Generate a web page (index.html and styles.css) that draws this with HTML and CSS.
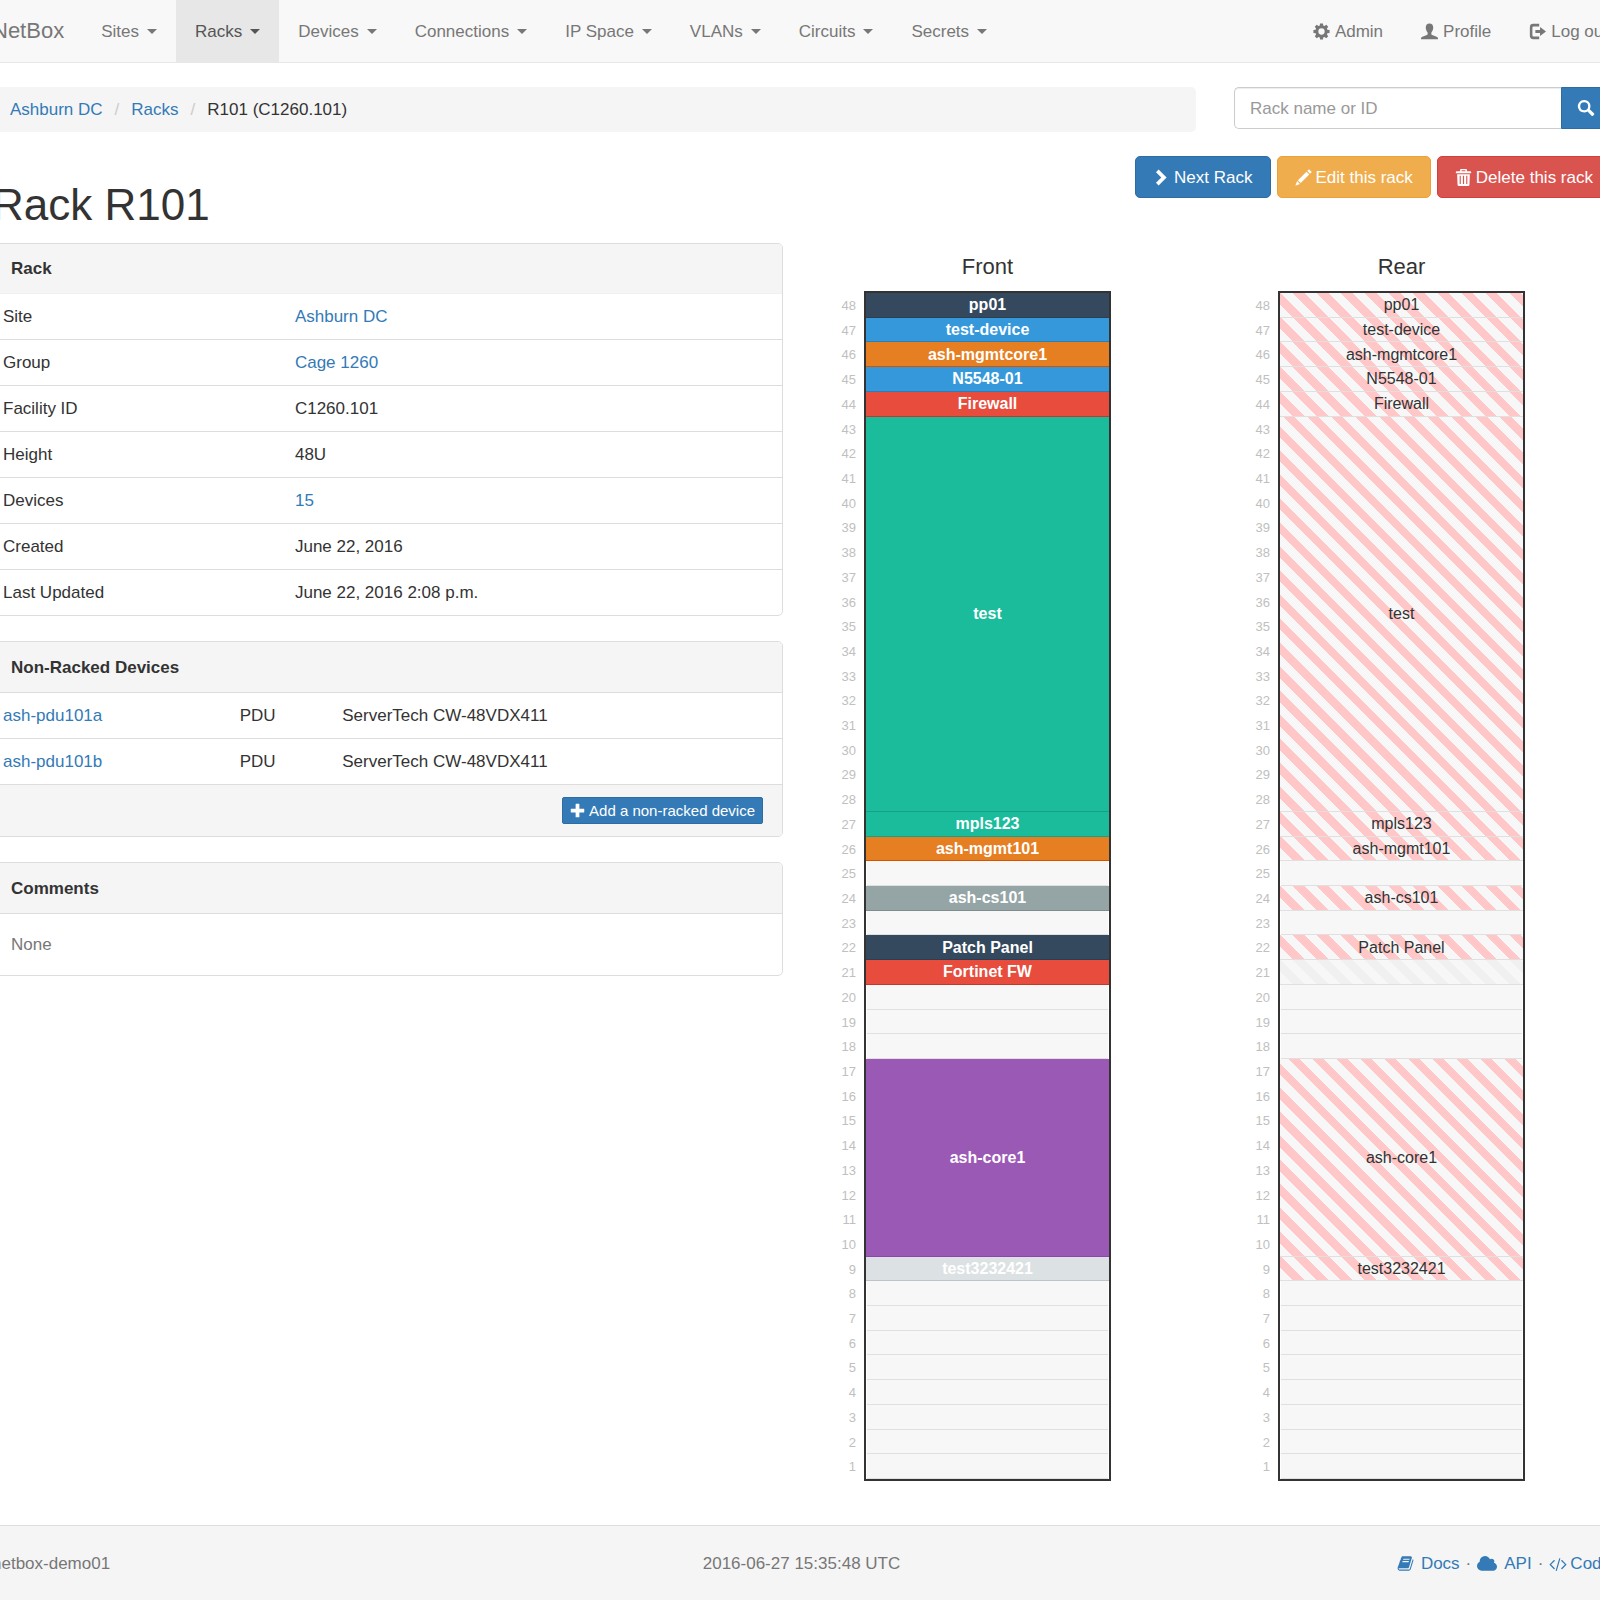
FILE: index.html
```html
<!DOCTYPE html>
<html lang="en">
<head>
<meta charset="utf-8">
<title>NetBox - Rack R101</title>
<meta name="viewport" content="width=device-width, initial-scale=1">
<link rel="stylesheet" href="styles.css">
</head>
<body>
<svg class="sprite" aria-hidden="true">
  <symbol id="i-cog" viewBox="0 0 20 20"><path fill-rule="evenodd" d="M8.300.5h3.400l.5 2.600 1.200.5 2.200-1.500 2.300 2.300-1.500 2.200.5 1.200 2.600.5v3.400l-2.600.5-.5 1.200 1.500 2.200-2.300 2.300-2.200-1.500-1.200.5-.5 2.600H8.300l-.5-2.600-1.200-.5-2.200 1.500-2.300-2.300 1.500-2.200-.5-1.200L.5 11.700V8.300l2.600-.5.5-1.200-1.500-2.200 2.300-2.300 2.200 1.500 1.200-.5zM10 6.300a3.700 3.700 0 1 0 0 7.400 3.700 3.700 0 0 0 0-7.400z"/></symbol>
  <symbol id="i-user" viewBox="0 0 20 20"><path d="M10 .5c2.800 0 4.400 1.900 4.400 4.800 0 2.300-1 4.700-2.200 5.800v1.700c0 .6.4 1 1 1.300l5.100 2.100c1 .4 1.700 1.300 1.700 2.300v.5H0v-.5c0-1 .7-1.900 1.700-2.300l5.100-2.100c.6-.3 1-.7 1-1.300v-1.700C6.600 10 5.600 7.600 5.600 5.300 5.600 2.400 7.200.5 10 .5z"/></symbol>
  <symbol id="i-logout" viewBox="0 0 20 20"><path d="M12 1H5a4 4 0 0 0-4 4v10a4 4 0 0 0 4 4h7v-3H5.500A1.500 1.500 0 0 1 4 14.500v-9A1.500 1.500 0 0 1 5.500 4H12zM13 4.800v3.400H7.500v3.600H13v3.400l7-5.200z"/></symbol>
  <symbol id="i-search" viewBox="0 0 20 20"><path fill-rule="evenodd" d="M8 1a7 7 0 1 0 3.700 12.900l4.500 4.600c.5.500 1.200.5 1.700 0l.9-.9c.5-.5.5-1.200 0-1.700l-4.700-4.500A7 7 0 0 0 8 1zm0 2.600a4.400 4.400 0 1 1 0 8.800 4.400 4.400 0 0 1 0-8.800z"/></symbol>
  <symbol id="i-right" viewBox="0 0 20 20"><path d="M6.600.6 3.500 3.700 9.800 10l-6.300 6.300 3.100 3.100L16 10z"/></symbol>
  <symbol id="i-pencil" viewBox="0 0 20 20"><path d="m16.400.3 3.300 3.300-2 2-3.300-3.300zM13.500 3.200l3.300 3.300L6.700 16.600l-3.300-3.300zM2.500 14.200l3.300 3.300L.4 19.600z"/></symbol>
  <symbol id="i-trash" viewBox="0 0 20 20"><path fill-rule="evenodd" d="M7 0h6a1 1 0 0 1 1 1v1.500h4a1 1 0 0 1 1 1V5H1V3.500a1 1 0 0 1 1-1h4V1a1 1 0 0 1 1-1zm.8 1.500v1h4.400v-1zM2.500 6.200h15L17 18.500a1.500 1.500 0 0 1-1.500 1.500h-11A1.500 1.500 0 0 1 3 18.500zM5.500 8v9.500h1.300V8zm3.800 0v9.500h1.400V8zm3.900 0v9.500h1.300V8z"/></symbol>
  <symbol id="i-plus" viewBox="0 0 20 20"><path d="M8 1h4a.5.500 0 0 1 .5.500v6h6a.5.500 0 0 1 .5.500v4a.5.500 0 0 1-.5.500h-6v6a.5.500 0 0 1-.5.500H8a.5.500 0 0 1-.5-.5v-6h-6A.5.500 0 0 1 1 12V8a.5.500 0 0 1 .5-.5h6v-6A.5.500 0 0 1 8 1z"/></symbol>
  <symbol id="i-book" viewBox="0 0 1792 1792"><path d="M1703 478q40 57 18 129l-275 906q-19 64-76.500 107.500t-122.500 43.500h-923q-77 0-148.500-53.500t-99.500-131.500q-24-67-2-127 0-4 3-27t4-37q1-8-3-21.500t-3-19.500q2-11 8-21t16.500-23.500 16.500-23.500q23-38 45-91.500t30-91.500q3-10 .5-30t-.5-28q3-11 17-28t17-23q21-36 42-92t25-90q1-9-2.500-32t.5-28q4-13 22-30.500t22-22.500q19-26 42.500-84.500t27.500-96.500q1-8-3-25.500t-2-26.500q2-8 9-18t18-23 17-21q8-12 16.500-30.500t15-35 16-36 19.500-32 26.500-23.500 36-11.500 47.500 5.500l-1 3q38-9 51-9h761q74 0 114 56t18 130l-274 906q-36 119-71.500 153.500t-128.500 34.500h-869q-27 0-38 15-11 16-1 43 24 70 144 70h923q29 0 56-15.500t35-41.500l300-987q7-22 5-57 38 15 59 43zm-1064 2q-4 13 2 22.500t20 9.500h608q13 0 25.500-9.500t16.500-22.500l21-64q4-13-2-22.500t-20-9.500h-608q-13 0-25.500 9.500t-16.500 22.500zm-83 256q-4 13 2 22.500t20 9.500h608q13 0 25.500-9.500t16.500-22.500l21-64q4-13-2-22.500t-20-9.500h-608q-13 0-25.500 9.500t-16.500 22.500z"/></symbol>
  <symbol id="i-cloud" viewBox="0 0 1920 1792"><path d="M1920 1152q0 159-112.500 271.500t-271.500 112.500h-1088q-185 0-316.500-131.500t-131.500-316.500q0-132 71-241.500t187-163.500q-2-28-2-43 0-212 150-362t362-150q158 0 286.500 88t187.500 230q70-62 166-62 106 0 181 75t75 181q0 75-41 138 129 30 213 134.500t84 239.500z"/></symbol>
  <symbol id="i-code" viewBox="0 0 1920 1792"><path d="M617 1399l-50 50q-10 10-23 10t-23-10l-466-466q-10-10-10-23t10-23l466-466q10-10 23-10t23 10l50 50q10 10 10 23t-10 23l-393 393 393 393q10 10 10 23t-10 23zm591-1067l-373 1291q-4 13-15.500 19.500t-23.500 2.500l-62-17q-13-4-19.500-15.500t-2.500-24.500l373-1291q4-13 15.500-19.500t23.500-2.500l62 17q13 4 19.500 15.500t2.500 24.500zm657 651l-466 466q-10 10-23 10t-23-10l-50-50q-10-10-10-23t10-23l393-393-393-393q-10-10-10-23t10-23l50-50q10-10 23-10t23 10l466 466q10 10 10 23t-10 23z"/></symbol>
</svg>

<header class="navbar">
  <nav class="container navbar-inner" aria-label="Main">
    <a class="brand" href="#">NetBox</a>
    <ul class="nav">
      <li><a href="#">Sites <span class="caret"></span></a></li>
      <li><a class="active" href="#">Racks <span class="caret"></span></a></li>
      <li><a href="#">Devices <span class="caret"></span></a></li>
      <li><a href="#">Connections <span class="caret"></span></a></li>
      <li><a href="#">IP Space <span class="caret"></span></a></li>
      <li><a href="#">VLANs <span class="caret"></span></a></li>
      <li><a href="#">Circuits <span class="caret"></span></a></li>
      <li><a href="#">Secrets <span class="caret"></span></a></li>
    </ul>
    <ul class="nav nav-user">
      <li><a href="#"><svg class="icon"><use href="#i-cog"/></svg>Admin</a></li>
      <li><a href="#"><svg class="icon"><use href="#i-user"/></svg>Profile</a></li>
      <li><a href="#"><svg class="icon"><use href="#i-logout"/></svg>Log out</a></li>
    </ul>
  </nav>
</header>

<main class="container">
  <div class="topline">
    <ol class="breadcrumb">
      <li><a href="#">Ashburn DC</a></li>
      <li><a href="#">Racks</a></li>
      <li>R101 (C1260.101)</li>
    </ol>
    <form class="search">
      <input type="text" placeholder="Rack name or ID" aria-label="Rack name or ID">
      <button type="button" aria-label="Search"><svg class="icon icon-md"><use href="#i-search"/></svg></button>
    </form>
  </div>

  <div class="title-row">
    <h1>Rack R101</h1>
    <div class="actions">
      <button type="button" class="btn btn-primary"><svg class="icon"><use href="#i-right"/></svg>Next Rack</button>
      <button type="button" class="btn btn-warning"><svg class="icon"><use href="#i-pencil"/></svg>Edit this rack</button>
      <button type="button" class="btn btn-danger"><svg class="icon"><use href="#i-trash"/></svg>Delete this rack</button>
    </div>
  </div>

  <div class="columns">
    <div class="details">
      <section class="panel">
        <h2 class="panel-heading plain">Rack</h2>
        <table class="attributes">
          <tr><td>Site</td><td><a href="#">Ashburn DC</a></td></tr>
          <tr><td>Group</td><td><a href="#">Cage 1260</a></td></tr>
          <tr><td>Facility ID</td><td>C1260.101</td></tr>
          <tr><td>Height</td><td>48U</td></tr>
          <tr><td>Devices</td><td><a href="#">15</a></td></tr>
          <tr><td>Created</td><td>June 22, 2016</td></tr>
          <tr><td>Last Updated</td><td>June 22, 2016 2:08 p.m.</td></tr>
        </table>
      </section>
      <section class="panel">
        <h2 class="panel-heading">Non-Racked Devices</h2>
        <table class="devices">
          <tr><td><a href="#">ash-pdu101a</a></td><td>PDU</td><td>ServerTech CW-48VDX411</td></tr>
          <tr><td><a href="#">ash-pdu101b</a></td><td>PDU</td><td>ServerTech CW-48VDX411</td></tr>
        </table>
        <div class="panel-footer">
          <button type="button" class="btn btn-primary btn-small"><svg class="icon icon-sm"><use href="#i-plus"/></svg>Add a non-racked device</button>
        </div>
      </section>
      <section class="panel">
        <h2 class="panel-heading">Comments</h2>
        <p class="panel-body">None</p>
      </section>
    </div>

    <section class="face">
      <h3>Front</h3>
      <ol class="legend"><li>48</li><li>47</li><li>46</li><li>45</li><li>44</li><li>43</li><li>42</li><li>41</li><li>40</li><li>39</li><li>38</li><li>37</li><li>36</li><li>35</li><li>34</li><li>33</li><li>32</li><li>31</li><li>30</li><li>29</li><li>28</li><li>27</li><li>26</li><li>25</li><li>24</li><li>23</li><li>22</li><li>21</li><li>20</li><li>19</li><li>18</li><li>17</li><li>16</li><li>15</li><li>14</li><li>13</li><li>12</li><li>11</li><li>10</li><li>9</li><li>8</li><li>7</li><li>6</li><li>5</li><li>4</li><li>3</li><li>2</li><li>1</li></ol>
      <ol class="rack rack-front">
        <li class="navy"><a href="#">pp01</a></li>
        <li class="blue"><a href="#">test-device</a></li>
        <li class="orange"><a href="#">ash-mgmtcore1</a></li>
        <li class="blue"><a href="#">N5548-01</a></li>
        <li class="red"><a href="#">Firewall</a></li>
        <li class="teal u16"><a href="#">test</a></li>
        <li class="teal"><a href="#">mpls123</a></li>
        <li class="orange"><a href="#">ash-mgmt101</a></li>
        <li class="empty"></li>
        <li class="gray"><a href="#">ash-cs101</a></li>
        <li class="empty"></li>
        <li class="navy"><a href="#">Patch Panel</a></li>
        <li class="red"><a href="#">Fortinet FW</a></li>
        <li class="empty"></li>
        <li class="empty"></li>
        <li class="empty"></li>
        <li class="purple u8"><a href="#">ash-core1</a></li>
        <li class="silver"><a href="#">test3232421</a></li>
        <li class="empty"></li>
        <li class="empty"></li>
        <li class="empty"></li>
        <li class="empty"></li>
        <li class="empty"></li>
        <li class="empty"></li>
        <li class="empty"></li>
        <li class="empty"></li>
      </ol>
    </section>

    <section class="face">
      <h3>Rear</h3>
      <ol class="legend"><li>48</li><li>47</li><li>46</li><li>45</li><li>44</li><li>43</li><li>42</li><li>41</li><li>40</li><li>39</li><li>38</li><li>37</li><li>36</li><li>35</li><li>34</li><li>33</li><li>32</li><li>31</li><li>30</li><li>29</li><li>28</li><li>27</li><li>26</li><li>25</li><li>24</li><li>23</li><li>22</li><li>21</li><li>20</li><li>19</li><li>18</li><li>17</li><li>16</li><li>15</li><li>14</li><li>13</li><li>12</li><li>11</li><li>10</li><li>9</li><li>8</li><li>7</li><li>6</li><li>5</li><li>4</li><li>3</li><li>2</li><li>1</li></ol>
      <ol class="rack">
        <li class="occupied">pp01</li>
        <li class="occupied">test-device</li>
        <li class="occupied">ash-mgmtcore1</li>
        <li class="occupied">N5548-01</li>
        <li class="occupied">Firewall</li>
        <li class="occupied u16">test</li>
        <li class="occupied">mpls123</li>
        <li class="occupied">ash-mgmt101</li>
        <li class="empty"></li>
        <li class="occupied">ash-cs101</li>
        <li class="empty"></li>
        <li class="occupied">Patch Panel</li>
        <li class="blocked"></li>
        <li class="empty"></li>
        <li class="empty"></li>
        <li class="empty"></li>
        <li class="occupied u8">ash-core1</li>
        <li class="occupied">test3232421</li>
        <li class="empty"></li>
        <li class="empty"></li>
        <li class="empty"></li>
        <li class="empty"></li>
        <li class="empty"></li>
        <li class="empty"></li>
        <li class="empty"></li>
        <li class="empty"></li>
      </ol>
    </section>
  </div>
</main>

<footer class="footer">
  <div class="container footer-inner">
    <p>netbox-demo01</p>
    <p>2016-06-27 15:35:48 UTC</p>
    <p class="footer-links">
      <a href="#"><svg class="icon"><use href="#i-book"/></svg>Docs</a><span>·</span><a href="#"><svg class="icon icon-lg"><use href="#i-cloud"/></svg>API</a><span>·</span><a class="tight" href="#"><svg class="icon icon-md"><use href="#i-code"/></svg>Code</a>
    </p>
  </div>
</footer>
</body>
</html>
```
FILE: styles.css
```css
* {
  box-sizing: border-box;
}

body {
  margin: 0;
  overflow-x: hidden;
  background: #fff;
  color: #333;
  font: 17px/25px "Liberation Sans", Arial, sans-serif;
}

h1, h2, h3, p, ul, ol {
  margin: 0;
  padding: 0;
  font-weight: normal;
  list-style: none;
}

a {
  color: #337ab7;
  text-decoration: none;
}

button, input {
  font: inherit;
}

.sprite {
  display: none;
}

.icon {
  flex: none;
  width: 17px;
  height: 17px;
  fill: currentColor;
}

.icon-md {
  width: 18px;
  height: 18px;
}

.icon-lg {
  width: 20px;
  height: 20px;
}

.icon-sm {
  width: 15px;
  height: 15px;
}

/* The content runs slightly past both window edges. */
.container {
  margin: 0 -11px 0 -8px;
}

/* Navigation bar */
.navbar {
  background: #f8f8f8;
  border-bottom: 1px solid #e7e7e7;
}

.navbar-inner {
  display: flex;
  align-items: stretch;
  height: 62px;
}

.brand {
  padding: 18px 18px 18px 0;
  color: #777;
  font-size: 22px;
}

.nav {
  display: flex;
}

.nav a {
  display: flex;
  align-items: center;
  gap: 8px;
  height: 62px;
  padding: 0 19px;
  color: #777;
}

.nav .active {
  background: #e7e7e7;
  color: #555;
}

.nav-user {
  margin-left: auto;
  margin-right: -16px;
}

.nav-user a {
  gap: 5px;
}

.caret {
  border: 5px solid transparent;
  border-top-color: currentColor;
  border-bottom: 0;
}

/* Breadcrumb and search */
.topline {
  display: grid;
  grid-template-columns: 1fr 377px;
  gap: 38px;
  align-items: start;
  margin-top: 24px;
}

.breadcrumb {
  display: flex;
  padding: 10px 18px;
  border-radius: 5px;
  background: #f5f5f5;
}

.breadcrumb li + li::before {
  content: "/";
  padding: 0 12px;
  color: #ccc;
}

.search {
  display: flex;
  height: 42px;
}

.search input {
  flex: 1;
  min-width: 0;
  padding: 0 15px;
  border: 1px solid #ccc;
  border-right: 0;
  border-radius: 5px 0 0 5px;
  background: #fff;
  color: #555;
  box-shadow: inset 0 1px 1px rgba(0, 0, 0, .075);
}

.search input::placeholder {
  color: #999;
  opacity: 1;
}

.search button {
  display: flex;
  align-items: center;
  padding: 0 15px;
  border: 1px solid #2e6da4;
  border-radius: 0 5px 5px 0;
  background: #337ab7;
  color: #fff;
}

/* Title and actions */
.title-row {
  display: flex;
  justify-content: space-between;
  align-items: flex-start;
  margin-top: 24px;
}

h1 {
  margin: 25px 0 14px;
  font-size: 44px;
  line-height: 48px;
}

.actions {
  display: flex;
  gap: 6px;
}

.btn {
  display: flex;
  align-items: center;
  gap: 4px;
  height: 42px;
  padding: 0 17px;
  border: 1px solid;
  border-radius: 5px;
  color: #fff;
  white-space: nowrap;
}

.btn-primary {
  border-color: #2e6da4;
  background: #337ab7;
}

.btn-warning {
  border-color: #eea236;
  background: #f0ad4e;
}

.btn-danger {
  border-color: #d43f3a;
  background: #d9534f;
}

.btn-small {
  height: 27px;
  padding: 0 7px;
  border-radius: 2px;
  font-size: 15px;
}

/* Page columns: details on the left, two rack faces on the right */
.columns {
  display: grid;
  grid-template-columns: minmax(0, 791fr) minmax(0, 377fr) minmax(0, 377fr);
  gap: 37px;
}

.panel {
  margin-bottom: 25px;
  border: 1px solid #ddd;
  border-radius: 5px;
  overflow: hidden;
}

.panel-heading {
  padding: 13px 18px 12px;
  border-bottom: 1px solid #ddd;
  background: #f5f5f5;
  font-size: 17px;
  font-weight: bold;
  line-height: 25px;
}

.panel-heading.plain {
  padding-top: 12px;
  border-bottom-color: #f0f0f0;
}

.panel-body {
  padding: 18px;
  color: #777;
}

.panel-footer {
  display: flex;
  justify-content: flex-end;
  padding: 12px 19px;
  border-top: 1px solid #ddd;
  background: #f5f5f5;
}

table {
  width: 100%;
  border-collapse: collapse;
  table-layout: fixed;
}

td {
  padding: 10px;
}

tr + tr td {
  border-top: 1px solid #ddd;
}

.attributes td:first-child {
  width: 37%;
}

.devices td:first-child {
  width: 30%;
}

.devices td:nth-child(2) {
  width: 13%;
}

/* Rack elevation */
.face {
  display: grid;
  grid-template-columns: 36px 247px;
  grid-template-rows: auto 1190px;
  column-gap: 8px;
  padding-top: 12px;
}

.face h3 {
  grid-column: 2;
  margin-bottom: 12px;
  font-size: 22px;
  line-height: 24px;
  text-align: center;
}

.legend, .rack {
  display: grid;
  grid-template-rows: repeat(48, minmax(0, 1fr));
}

.legend {
  padding: 2px 0;
  color: #c0c0c0;
  font-size: 13px;
  text-align: right;
}

.rack {
  border: 2px solid #333;
  font-size: 16px;
}

.rack li {
  display: flex;
  align-items: center;
  justify-content: center;
  border-bottom: 1px solid #e0e0e0;
}

.rack-front a {
  color: #fff;
  font-weight: bold;
}

.rack .u16 {
  grid-row: span 16;
}

.rack .u8 {
  grid-row: span 8;
}

.rack .empty {
  margin: 0 1px;
  background: #f7f7f7;
}

.rack .occupied {
  background: repeating-linear-gradient(45deg, #f7f7f7, #f7f7f7 9px, #ffc7c7 9px, #ffc7c7 17px);
}

.rack .blocked {
  background: repeating-linear-gradient(45deg, #f7f7f7, #f7f7f7 9px, #f0f0f0 9px, #f0f0f0 17px);
}

.rack .navy {
  border-color: #2c3e50;
  background: #34495e;
}

.rack .blue {
  border-color: #2980b9;
  background: #3498db;
}

.rack .orange {
  border-color: #d35400;
  background: #e67e22;
}

.rack .red {
  border-color: #c0392b;
  background: #e74c3c;
}

.rack .teal {
  border-color: #16a085;
  background: #1abc9c;
}

.rack .gray {
  border-color: #7f8c8d;
  background: #95a5a6;
}

.rack .purple {
  border-color: #8e44ad;
  background: #9b59b6;
}

.rack .silver {
  border-color: #bdc3c7;
  background: #dce2e3;
}

/* Footer */
.footer {
  margin-top: 44px;
  border-top: 1px solid #ddd;
  background: #f5f5f5;
  color: #777;
}

.footer-inner {
  display: grid;
  grid-template-columns: 1fr auto 1fr;
  padding: 25px 0 24px;
}

.footer-links, .footer-links a {
  display: flex;
  align-items: center;
  justify-content: flex-end;
}

.footer-links {
  gap: 6px;
}

.footer-links a {
  gap: 7px;
}

.footer-links .tight {
  gap: 3px;
}
```
